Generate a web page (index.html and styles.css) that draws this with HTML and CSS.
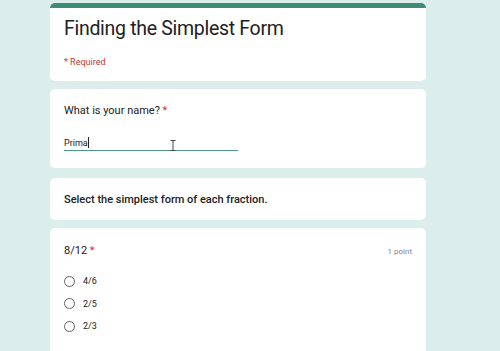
FILE: index.html
```html
<!DOCTYPE html>
<html>
<head>
<meta charset="utf-8">
<link rel="stylesheet" href="styles.css">
</head>
<body>
<div class="page">
  <div class="card header">
    <div class="bar"></div>
    <div class="header-body">
      <h1 class="title">Finding the Simplest Form</h1>
      <div class="required">* Required</div>
    </div>
  </div>

  <div class="card question name-q">
    <div class="q-title">What is your name? <span class="star">*</span></div>
    <div class="input">
      <span class="input-text">Prima</span><span class="caret"></span>
      <svg class="ibeam" width="6" height="11" viewBox="0 0 6 11"><path d="M0.5 0.5h5M3 0.5v10M0.5 10.5h5" stroke="#444" stroke-width="1" fill="none"/></svg>
    </div>
  </div>

  <div class="card section">
    <div class="section-text">Select the simplest form of each fraction.</div>
  </div>

  <div class="card question frac-q">
    <div class="q-head">
      <div class="q-title">8/12 <span class="star">*</span></div>
      <div class="points">1 point</div>
    </div>
    <div class="options">
      <div class="option"><span class="radio"></span><span class="opt-label">4/6</span></div>
      <div class="option"><span class="radio"></span><span class="opt-label">2/5</span></div>
      <div class="option"><span class="radio"></span><span class="opt-label">2/3</span></div>
    </div>
  </div>
</div>
</body>
</html>
```

FILE: styles.css
```css
html, body {
  margin: 0;
  padding: 0;
  background: #dbeeec;
  height: 351px;
  overflow: hidden;
}
body {
  font-family: Roboto, "Liberation Sans", Arial, sans-serif;
  color: #202124;
}
.page {
  width: 376px;
  margin-left: 50px;
  padding-top: 3px;
  display: flex;
  flex-direction: column;
}
.card {
  background: #fff;
  border-radius: 5px;
  overflow: hidden;
}
.header {
  height: 78px;
}
.bar {
  height: 5px;
  background: #3f8c79;
}
.header-body {
  padding: 8px 14px 0;
}
.title {
  margin: 0;
  font-family: Roboto, "Liberation Sans", sans-serif;
  font-weight: 400;
  font-size: 19.5px;
  line-height: 26px;
  letter-spacing: -0.3px;
  color: #202124;
}
.required {
  margin-top: 15px;
  font-size: 9px;
  color: #c5392f;
}
.name-q {
  margin-top: 8px;
  height: 79px;
  padding: 0 14px;
  box-sizing: border-box;
}
.q-title {
  font-size: 11px;
  line-height: 14px;
  color: #202124;
}
.name-q .q-title {
  margin-top: 15px;
}
.star {
  color: #d93025;
}
.input {
  position: relative;
  margin-top: 19px;
  width: 174px;
  height: 13px;
  border-bottom: 1.6px solid #4a9a85;
  font-size: 9px;
  line-height: 12px;
  display: flex;
  align-items: flex-start;
}
.caret {
  display: inline-block;
  width: 1px;
  height: 11px;
  background: #202124;
  margin-left: 0.5px;
}
.ibeam {
  position: absolute;
  left: 106px;
  top: 3px;
}
.section {
  margin-top: 10px;
  height: 42px;
  padding: 0 14px;
  display: flex;
  align-items: center;
}
.section-text {
  font-size: 11px;
  font-weight: 500;
  color: #202124;
}
.frac-q {
  margin-top: 8px;
  height: 140px;
  padding: 16px 14px 0;
  box-sizing: border-box;
}
.q-head {
  display: flex;
  justify-content: space-between;
  align-items: center;
}
.points {
  font-size: 8px;
  color: #80868b;
}
.options {
  margin-top: 17px;
  display: flex;
  flex-direction: column;
  gap: 10px;
}
.option {
  display: flex;
  align-items: center;
  height: 12.5px;
}
.radio {
  width: 9px;
  height: 9px;
  border: 1.6px solid #5f6368;
  border-radius: 50%;
  margin-right: 8px;
}
.opt-label {
  font-size: 9px;
  color: #202124;
}
```
